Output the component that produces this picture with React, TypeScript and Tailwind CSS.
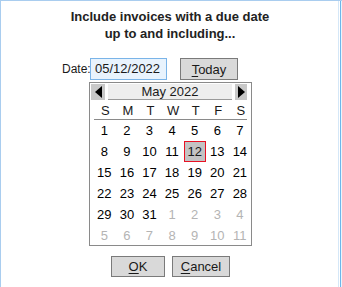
import { useState } from 'react'

const weekDays = ['S', 'M', 'T', 'W', 'T', 'F', 'S']

// May 2022 starts on a Sunday
const cells = [
  ...Array.from({ length: 31 }, (_, i) => ({ day: i + 1, muted: false })),
  ...Array.from({ length: 11 }, (_, i) => ({ day: i + 1, muted: true })),
]

const Btn = ({ label, className }: { label: string; className: string }) => (
  <button
    type="button"
    className={`h-[21px] border border-[#7a7a7a] bg-[#d9d9d9] text-[13px] text-[#1a1a1a] leading-none ${className}`}
  >
    <span className="underline underline-offset-2">{label[0]}</span>
    {label.slice(1)}
  </button>
)

export default function App() {
  const [selected, setSelected] = useState(12)
  return (
    <div
      className="w-[342px] h-[287px] flex bg-white overflow-hidden"
      style={{ fontFamily: '"Liberation Sans", Arial, sans-serif' }}
    >
      <div className="flex-1 flex border-l border-t border-[#a9cdef]">
        <div className="flex-1 flex flex-col border-r border-[#d5e7f7]">
          <div className="mt-[7px] text-center font-bold text-[13px] leading-[17px] text-[#222] pl-[1px]">
            Include invoices with a due date
            <br />
            up to and including...
          </div>

          <div className="mt-[16px] flex items-center ml-[61px]">
            <span className="w-[28px] pr-[3px] text-right text-[12px] text-[#1a1a1a]">Date:</span>
            <div className="w-[77px] h-[22px] border border-[#7ab4e8] bg-[#e8f3fd] text-[13px] text-[#1a1a1a] flex items-center pl-[4px]">
              05/{String(selected).padStart(2, '0')}/2022
            </div>
            <Btn label="Today" className="w-[58px] ml-[13px] h-[22px]" />
          </div>

          <div className="mt-[2px] ml-[88px] w-[163px] h-[164px] border border-[#8a8a8a] flex flex-col pt-[1px]">
            <div className="flex h-[16px] items-stretch pl-[1px] pr-[4px]">
              <div className="w-[14px] bg-[#c8c8c8] flex items-center justify-center">
                <svg width="7" height="12" viewBox="0 0 7 12">
                  <path d="M7 0 L0 6 L7 12 Z" fill="#000" />
                </svg>
              </div>
              <div className="flex-1 mx-[3px] bg-[#eeeeee] border-b border-[#9a9a9a] flex items-center justify-center text-[13px] text-[#1a1a1a]">
                May 2022
              </div>
              <div className="w-[12px] bg-[#c8c8c8] flex items-center justify-center">
                <svg width="7" height="12" viewBox="0 0 7 12">
                  <path d="M0 0 L7 6 L0 12 Z" fill="#000" />
                </svg>
              </div>
            </div>

            <div className="grid grid-cols-[repeat(7,22.6px)] ml-[4px] mt-[3px] h-[17px] text-[13px] text-[#1a1a1a]">
              {weekDays.map((d, i) => (
                <span key={i} className="text-center leading-[16px]">
                  {d}
                </span>
              ))}
            </div>
            <div className="mx-[4px] border-b border-[#8a8a8a]" />

            <div className="grid grid-cols-[repeat(7,22.6px)] ml-[3px] text-[13px]">
              {cells.map((c, i) => {
                const isSel = !c.muted && c.day === selected
                return (
                  <div key={i} className="h-[21px] flex items-center justify-center">
                    <span
                      onClick={() => !c.muted && setSelected(c.day)}
                      className={
                        isSel
                          ? 'w-[22px] h-[21px] flex items-center justify-center bg-[#c3c3c3] border border-[#e81123] text-[#1a1a1a]'
                          : c.muted
                            ? 'text-[#b4b4b4]'
                            : 'text-[#000]'
                      }
                    >
                      {c.day}
                    </span>
                  </div>
                )
              })}
            </div>
          </div>

          <div className="mt-[10px] flex gap-[7px] ml-[110px]">
            <Btn label="OK" className="w-[54px]" />
            <Btn label="Cancel" className="w-[58px]" />
          </div>
        </div>
        <div className="w-[1px]" />
        <div className="w-[1px] bg-[#6db6ea]" />
        <div className="w-[1px] bg-[#eaf4fc]" />
      </div>
    </div>
  )
}
